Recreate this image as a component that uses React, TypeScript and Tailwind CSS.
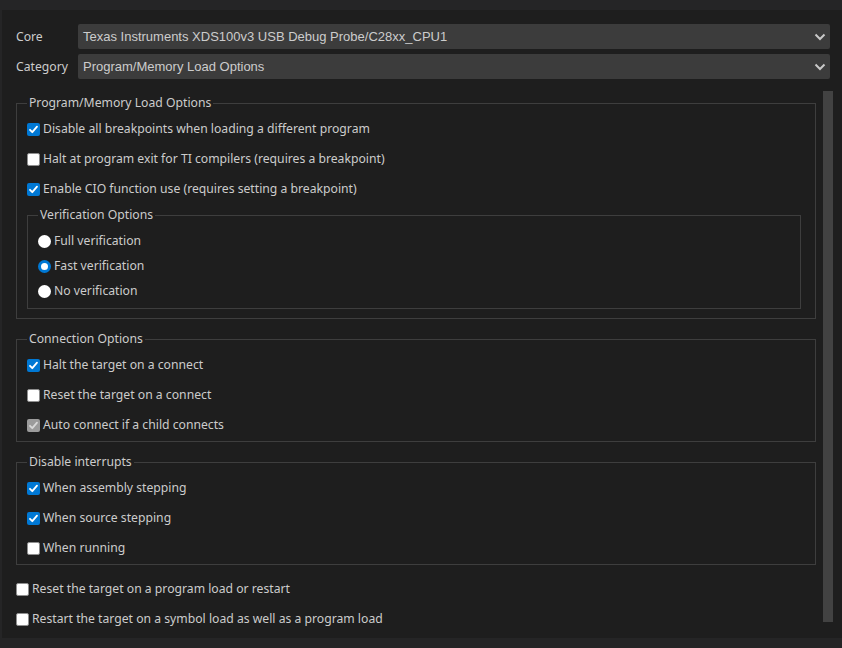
import React from 'react';

type Box = 'on' | 'off' | 'dis';

const Check: React.FC<{ state: Box }> = ({ state }) => {
  if (state === 'off') {
    return <span className="inline-block w-[13px] h-[13px] shrink-0 rounded-[2px] bg-white border border-[#8f8f8f]" />;
  }
  const bg = state === 'on' ? 'bg-[#0078d4]' : 'bg-[#9b9b9b]';
  const stroke = state === 'on' ? '#ffffff' : '#d8d8d8';
  return (
    <span className={`inline-flex items-center justify-center w-[13px] h-[13px] shrink-0 rounded-[2px] ${bg}`}>
      <svg width="11" height="11" viewBox="0 0 11 11">
        <path d="M2 5.8 L4.3 8.2 L9 2.6" fill="none" stroke={stroke} strokeWidth="1.8" strokeLinecap="round" strokeLinejoin="round" />
      </svg>
    </span>
  );
};

const Radio: React.FC<{ on?: boolean }> = ({ on }) =>
  on ? (
    <span className="inline-block w-[13px] h-[13px] shrink-0 rounded-full bg-white border-[3px] border-[#0078d4]" />
  ) : (
    <span className="inline-block w-[13px] h-[13px] shrink-0 rounded-full bg-white" />
  );

const CheckRow: React.FC<{ state: Box; label: string }> = ({ state, label }) => (
  <div className="h-[30px] flex items-center gap-[3px]">
    <Check state={state} />
    <span>{label}</span>
  </div>
);

const RadioRow: React.FC<{ on?: boolean; label: string }> = ({ on, label }) => (
  <div className="h-[25px] flex items-center gap-[3px]">
    <Radio on={on} />
    <span>{label}</span>
  </div>
);

const Chevron = () => (
  <svg width="12" height="8" viewBox="0 0 12 8" className="shrink-0">
    <path d="M1.5 1.5 L6 6 L10.5 1.5" fill="none" stroke="#c8c8c8" strokeWidth="2" />
  </svg>
);

const Select: React.FC<{ value: string }> = ({ value }) => (
  <div className="flex-1 h-[25px] bg-[#3c3c3c] rounded-[2px] flex items-center justify-between pl-[5px] pr-[4px] text-[13px] text-[#cccccc] font-['Liberation_Sans',Arial,sans-serif]">
    <span>{value}</span>
    <Chevron />
  </div>
);

const Group: React.FC<{ title: string; className?: string; bodyClass?: string; children: React.ReactNode }> = ({
  title,
  className = '',
  bodyClass = 'mt-[2px]',
  children,
}) => (
  <fieldset className={`border border-[#3e3e3e] pl-[10px] ${className}`}>
    <legend className="px-[2px] h-[18px] leading-[18px]">{title}</legend>
    <div className={bodyClass}>{children}</div>
  </fieldset>
);

export default function App() {
  return (
    <div className="w-[842px] h-[648px] bg-[#252526] pt-[10px] pb-[10px] pl-[2px] overflow-hidden text-[12.2px] text-[#cccccc] font-['Noto_Sans',sans-serif]">
      <div className="h-full bg-[#1e1e1e] flex flex-col">
        <div className="pt-[14px] pl-[14px] pr-[12px] flex flex-col gap-[5px]">
          <div className="flex items-center">
            <span className="w-[62px] pt-[2px]">Core</span>
            <Select value="Texas Instruments XDS100v3 USB Debug Probe/C28xx_CPU1" />
          </div>
          <div className="flex items-center">
            <span className="w-[62px] pt-[2px]">Category</span>
            <Select value="Program/Memory Load Options" />
          </div>
        </div>
        <div className="flex mt-[11px] pl-[14px]">
          <div className="w-[800px] pt-[4px]">
            <Group title="Program/Memory Load Options" className="pr-[14px] pb-[9px]">
              <CheckRow state="on" label="Disable all breakpoints when loading a different program" />
              <CheckRow state="off" label="Halt at program exit for TI compilers (requires a breakpoint)" />
              <CheckRow state="on" label="Enable CIO function use (requires setting a breakpoint)" />
              <Group title="Verification Options" className="mt-[2px] pb-[4px]" bodyClass="mt-[5px]">
                <RadioRow label="Full verification" />
                <RadioRow on label="Fast verification" />
                <RadioRow label="No verification" />
              </Group>
            </Group>
            <Group title="Connection Options" className="mt-[11px] pb-[1px]">
              <CheckRow state="on" label="Halt the target on a connect" />
              <CheckRow state="off" label="Reset the target on a connect" />
              <CheckRow state="dis" label="Auto connect if a child connects" />
            </Group>
            <Group title="Disable interrupts" className="mt-[11px] pb-[1px]">
              <CheckRow state="on" label="When assembly stepping" />
              <CheckRow state="on" label="When source stepping" />
              <CheckRow state="off" label="When running" />
            </Group>
            <div className="mt-[9px]">
              <CheckRow state="off" label="Reset the target on a program load or restart" />
              <CheckRow state="off" label="Restart the target on a symbol load as well as a program load" />
            </div>
          </div>
          <div className="ml-[7px] mt-[1px] w-[10px] h-[531px] bg-[#424242]" />
        </div>
      </div>
    </div>
  );
}
